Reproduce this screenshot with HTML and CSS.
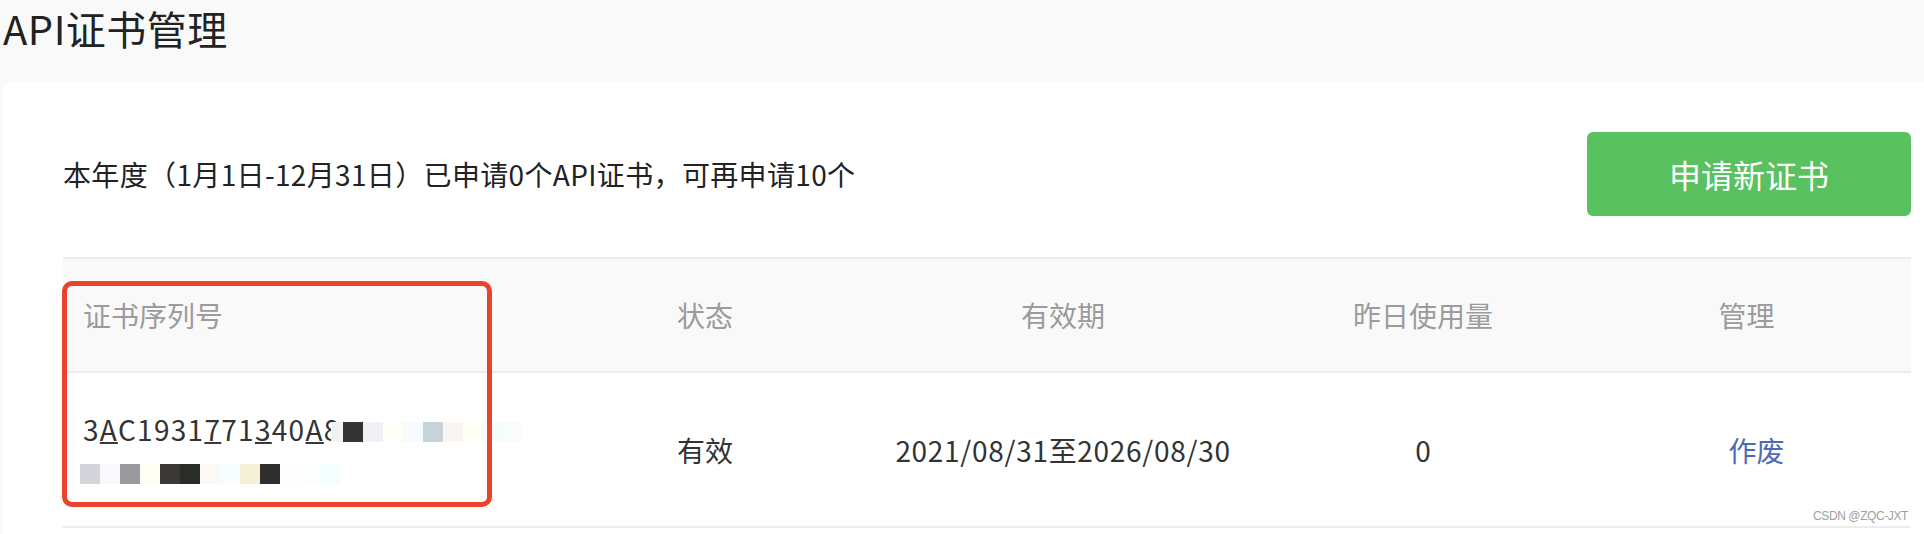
FILE: index.html
```html
<!DOCTYPE html>
<html lang="zh-CN">
<head>
<meta charset="utf-8">
<title>API证书管理</title>
<link rel="stylesheet" href="styles.css">
</head>
<body>
<div class="page">
  <h1 class="title">API证书管理</h1>
  <div class="card">
    <div class="toolbar">
      <p class="intro">本年度（1月1日-12月31日）已申请0个API证书，可再申请10个</p>
      <a class="btn" href="#">申请新证书</a>
    </div>
    <div class="table">
      <div class="row head">
        <div class="cell c1">证书序列号</div>
        <div class="cell c2">状态</div>
        <div class="cell c3">有效期</div>
        <div class="cell c4">昨日使用量</div>
        <div class="cell c5">管理</div>
      </div>
      <div class="row body">
        <div class="cell c1">
          <div class="serial">
            <div class="serial-line"><span class="sn">3<u>A</u>C1931<u>7</u>71<u>3</u>40<u>A</u>8</span><svg class="mosaic m1" width="192" height="20" viewBox="0 0 192 20"><rect x="0" y="0" width="12" height="20" fill="#eef2f0"/><rect x="12" y="0" width="20" height="20" fill="#333235"/><rect x="32" y="0" width="20" height="20" fill="#f1f0f5"/><rect x="52" y="0" width="20" height="20" fill="#fffef7"/><rect x="72" y="0" width="20" height="20" fill="#f6fcfe"/><rect x="92" y="0" width="20" height="20" fill="#c6d3d8"/><rect x="112" y="0" width="20" height="20" fill="#f9f5f2"/><rect x="132" y="0" width="20" height="20" fill="#fffff4"/><rect x="152" y="0" width="20" height="20" fill="#f4fbfd"/><rect x="172" y="0" width="20" height="20" fill="#f8fcfc"/></svg></div>
            <div class="serial-line second"><svg class="mosaic m2" width="260" height="20" viewBox="0 0 260 20"><rect x="0" y="0" width="20" height="20" fill="#d2d6db"/><rect x="20" y="0" width="20" height="20" fill="#fbf8fc"/><rect x="40" y="0" width="20" height="20" fill="#999a9b"/><rect x="60" y="0" width="20" height="20" fill="#fefef3"/><rect x="80" y="0" width="20" height="20" fill="#3b3938"/><rect x="100" y="0" width="20" height="20" fill="#2a2c2a"/><rect x="120" y="0" width="20" height="20" fill="#fcf8f6"/><rect x="140" y="0" width="20" height="20" fill="#f7fcfe"/><rect x="160" y="0" width="20" height="20" fill="#f5f0d8"/><rect x="180" y="0" width="20" height="20" fill="#2e2e2e"/><rect x="200" y="0" width="20" height="20" fill="#fefefe"/><rect x="220" y="0" width="20" height="20" fill="#fcfefe"/><rect x="240" y="0" width="20" height="20" fill="#f3ffff"/></svg></div>
          </div>
        </div>
        <div class="cell c2">有效</div>
        <div class="cell c3 date">2021/08/31至2026/08/30</div>
        <div class="cell c4">0</div>
        <div class="cell c5"><a class="link" href="#">作废</a></div>
      </div>
      <div class="highlight"></div>
    </div>
  </div>
  <div class="watermark">CSDN @ZQC-JXT</div>
</div>
</body>
</html>
```
FILE: styles.css
```css
html, body {
  margin: 0;
  padding: 0;
  height: 100%;
}
body {
  background: #f9f9f9;
  overflow: hidden;
  font-family: "Noto Sans CJK SC", "Noto Sans", sans-serif;
  color: #333;
}
.page {
  position: relative;
  padding-left: 3px;
  height: 100%;
}
.title {
  margin: 0;
  padding-top: 8px;
  height: 40px;
  font-size: 40px;
  line-height: 40px;
  font-weight: 400;
  letter-spacing: 0.5px;
  color: #222;
  margin-bottom: 34px;
}
.card {
  background: #fff;
  border-top-left-radius: 8px;
  padding: 50px 13px 0 60px;
  height: 402px;
}
.toolbar {
  display: flex;
  justify-content: space-between;
  align-items: center;
  height: 84px;
  margin-bottom: 41px;
}
.intro {
  margin: 0;
  font-size: 28px;
  line-height: 40px;
  letter-spacing: 0.35px;
  color: #222;
}
.btn {
  display: flex;
  align-items: center;
  justify-content: center;
  width: 324px;
  height: 84px;
  border-radius: 6px;
  background: #59c160;
  color: #fff;
  font-size: 32px;
  text-decoration: none;
}
.table {
  position: relative;
  width: 1848px;
}
.row {
  display: grid;
  grid-template-columns: 594px 243px 326px 394px 291px;
  align-items: center;
  font-size: 28px;
}
.row.head {
  height: 112px;
  background: #f9f9f9;
  border-top: 2px solid #ececec;
  border-bottom: 2px solid #ececec;
  color: #9b9b9b;
}
.row.body {
  height: 153px;
  border-bottom: 2px solid #ececec;
  color: #333;
}
.cell.c1, .cell.c2 {
  padding-left: 20px;
}
.cell.c3, .cell.c4 {
  display: flex;
  justify-content: center;
  white-space: nowrap;
}
.cell.c5 {
  text-align: center;
  padding-right: 38px;
}
.date {
  letter-spacing: 0.7px;
}
.serial {
  line-height: 42px;
}
.serial-line {
  white-space: nowrap;
  height: 42px;
}
.sn {
  letter-spacing: 1.3px;
}
.serial-line u {
  text-decoration-thickness: 2px;
  text-underline-offset: 1px;
  text-decoration-color: #3a3a30;
}
.mosaic {
  vertical-align: middle;
}
.m1 {
  margin-left: -10px;
  position: relative;
  top: -1px;
}
.second {
  margin-left: -3px;
}
.m2 {
  position: relative;
  top: -1px;
}
.link {
  color: #4b6cb5;
  text-decoration: none;
  margin-left: 20px;
}
.highlight {
  position: absolute;
  left: -1px;
  top: 24px;
  width: 430px;
  height: 226px;
  box-sizing: border-box;
  border: 5px solid #e8432b;
  border-radius: 10px;
  pointer-events: none;
}
.watermark {
  position: absolute;
  right: 16px;
  top: 509px;
  font-family: "Liberation Sans", Arial, sans-serif;
  font-size: 12px;
  letter-spacing: -0.4px;
  color: #a0a0a0;
}
```
